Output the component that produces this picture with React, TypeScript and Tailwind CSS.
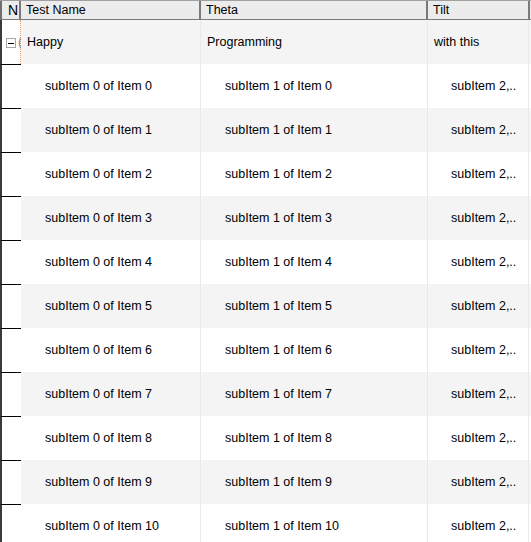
import React from "react";

const font = { fontFamily: '"Liberation Sans", Arial, sans-serif' };

export default function App() {
  const items = Array.from({ length: 11 }, (_, i) => i);
  return (
    <div
      className="w-[531px] h-[542px] overflow-hidden bg-white text-[12.5px] text-black leading-none"
      style={font}
    >
      {/* Header */}
      <div className="flex h-[20px] border-t border-[#a0a0a0] bg-[#ececec]">
        <div className="w-[21px] shrink-0 flex items-center pl-[6px] border-l-2 border-[#6f6f6f] border-r-2 border-r-[#7a7a7a] border-b border-b-[#7a7a7a] text-[14px]">
          N
        </div>
        <div className="w-[180px] shrink-0 flex items-center pl-[5px] border-r-2 border-[#7a7a7a] border-b border-b-[#7a7a7a]">
          Test Name
        </div>
        <div className="w-[227px] shrink-0 flex items-center pl-[5px] border-r-2 border-[#7a7a7a] border-b border-b-[#7a7a7a]">
          Theta
        </div>
        <div className="w-[102px] shrink-0 flex items-center pl-[5px] border-r-2 border-[#7a7a7a] border-b border-b-[#7a7a7a]">
          Tilt
        </div>
        <div className="flex-1 border-b border-[#7a7a7a]" />
      </div>

      {/* Parent row */}
      <div className="flex h-[44px] bg-[#f4f4f4]">
        <div className="relative w-[21px] shrink-0 bg-white border-l-2 border-[#3a3a3a] overflow-hidden">
          <div className="absolute right-0 top-0 bottom-0 border-r border-dotted border-[#e0a070]" />
          <div className="absolute left-[4px] top-[18px] w-[10px] h-[10px] border border-[#a8a8a8] bg-white flex items-center justify-center">
            <div className="w-[6px] h-px bg-black" />
          </div>
          <div className="absolute left-[16px] top-[16px] text-[12px] text-[#888]">(</div>
        </div>
        <div className="w-[180px] shrink-0 flex items-center pl-[6px] border-r border-[#e9e9e9]">
          Happy
        </div>
        <div className="w-[227px] shrink-0 flex items-center pl-[6px] border-r border-[#e9e9e9]">
          Programming
        </div>
        <div className="w-[101px] shrink-0 flex items-center pl-[6px] border-r border-[#e9e9e9]">
          with this
        </div>
        <div className="flex-1" />
      </div>

      {items.map((i) => (
        <div
          key={i}
          className={`flex h-[44px] ${i % 2 === 1 ? "bg-[#f4f4f4]" : "bg-white"}`}
        >
          <div className="w-[21px] shrink-0 bg-white border-l-2 border-[#3a3a3a] border-t border-t-black" />
          <div className="w-[180px] shrink-0 flex items-center pl-[24px] border-r border-[#e9e9e9]">
            subItem 0 of Item {i}
          </div>
          <div className="w-[227px] shrink-0 flex items-center pl-[24px] border-r border-[#e9e9e9]">
            subItem 1 of Item {i}
          </div>
          <div className="w-[101px] shrink-0 flex items-center pl-[23px] border-r border-[#e9e9e9]">
            subItem 2,..
          </div>
          <div className="flex-1" />
        </div>
      ))}
    </div>
  );
}
